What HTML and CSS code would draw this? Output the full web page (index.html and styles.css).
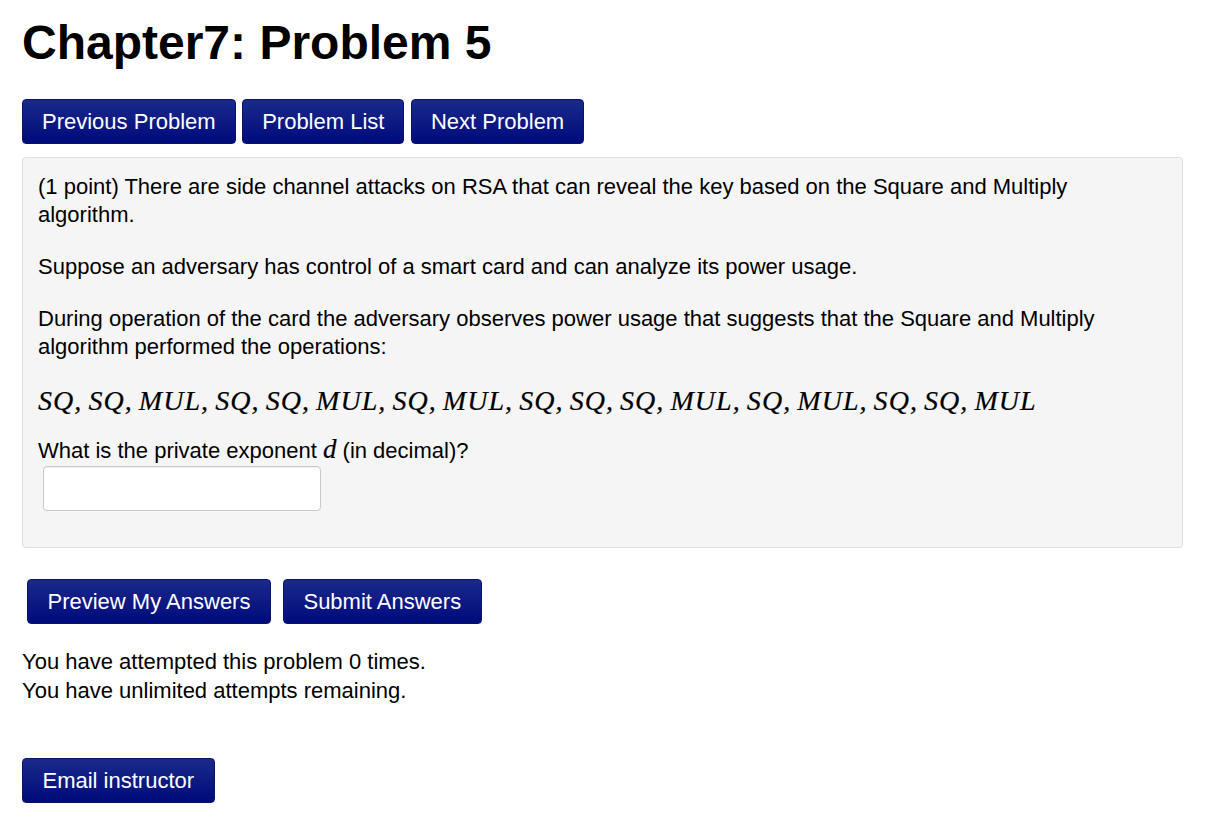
FILE: index.html
```html
<!DOCTYPE html>
<html>
<head>
<meta charset="utf-8">
<link rel="stylesheet" href="styles.css">
</head>
<body>
<h1 class="title">Chapter7: Problem 5</h1>
<div class="nav">
  <a class="btn">Previous Problem</a>
  <a class="btn">Problem List</a>
  <a class="btn">Next Problem</a>
</div>
<div class="problem">
  <p>(1 point) There are side channel attacks on RSA that can reveal the key based on the Square and Multiply algorithm.</p>
  <p>Suppose an adversary has control of a smart card and can analyze its power usage.</p>
  <p>During operation of the card the adversary observes power usage that suggests that the Square and Multiply algorithm performed the operations:</p>
  <p class="math">SQ, SQ, MUL, SQ, SQ, MUL, SQ, MUL, SQ, SQ, SQ, MUL, SQ, MUL, SQ, SQ, MUL</p>
  <p class="last">What is the private exponent <span class="mi">d</span> (in decimal)?</p>
  <div class="answer"><input class="field" type="text"></div>
</div>
<div class="actions">
  <a class="btn">Preview My Answers</a>
  <a class="btn">Submit Answers</a>
</div>
<div class="attempts">
  <div>You have attempted this problem 0 times.</div>
  <div>You have unlimited attempts remaining.</div>
</div>
<div class="email">
  <a class="btn">Email instructor</a>
</div>
</body>
</html>
```
FILE: styles.css
```css
body {
  margin: 0;
  padding: 0 41px 0 22px;
  font-family: "Liberation Sans", Arial, sans-serif;
  font-size: 22px;
  line-height: 28px;
  color: #000;
  background: #fff;
}
.title {
  margin: 15px 0 28px;
  font-size: 48px;
  line-height: 56px;
  font-weight: bold;
}
.btn {
  display: inline-block;
  box-sizing: border-box;
  height: 45px;
  padding: 0 19.5px;
  line-height: 43px;
  font-size: 22px;
  color: #fff;
  background: linear-gradient(#1a2a8a, #000a7c);
  border: 1px solid #0a1466;
  border-radius: 4px;
  white-space: nowrap;
}
.nav {
  display: flex;
  gap: 6.5px;
}
.nav .btn {
  padding: 0 19px;
}
.problem {
  margin-top: 13px;
  box-sizing: border-box;
  height: 391px;
  padding: 15px 15px;
  background: #f5f5f5;
  border: 1px solid #dddddd;
  border-radius: 4px;
}
.problem p {
  margin: 0 0 24px;
}
.problem p.math {
  padding-top: 2px;
  margin-bottom: 22px;
}
.problem p.last {
  margin: 0;
}
.math {
  font-family: "Liberation Serif", "Times New Roman", serif;
  font-style: italic;
  font-size: 28px;
  letter-spacing: 1.05px;
  word-spacing: -2px;
  -webkit-text-stroke: 0.2px #000;
}
.mi {
  font-family: "Liberation Serif", "Times New Roman", serif;
  font-style: italic;
  font-size: 27px;
  line-height: 0;
  -webkit-text-stroke: 0.2px #000;
}
.answer {
  padding: 1px 0 0 5px;
}
.field {
  display: block;
  box-sizing: border-box;
  width: 278px;
  height: 45px;
  margin: 0;
  background: #fff;
  border: 1px solid #c8c8c8;
  border-radius: 4px;
  box-shadow: inset 0 1px 1px rgba(0,0,0,0.06);
}
.actions {
  display: flex;
  gap: 12px;
  margin-top: 31px;
  padding-left: 5px;
}
.attempts {
  margin-top: 23px;
  line-height: 29px;
}
.email {
  margin-top: 53px;
}
```
